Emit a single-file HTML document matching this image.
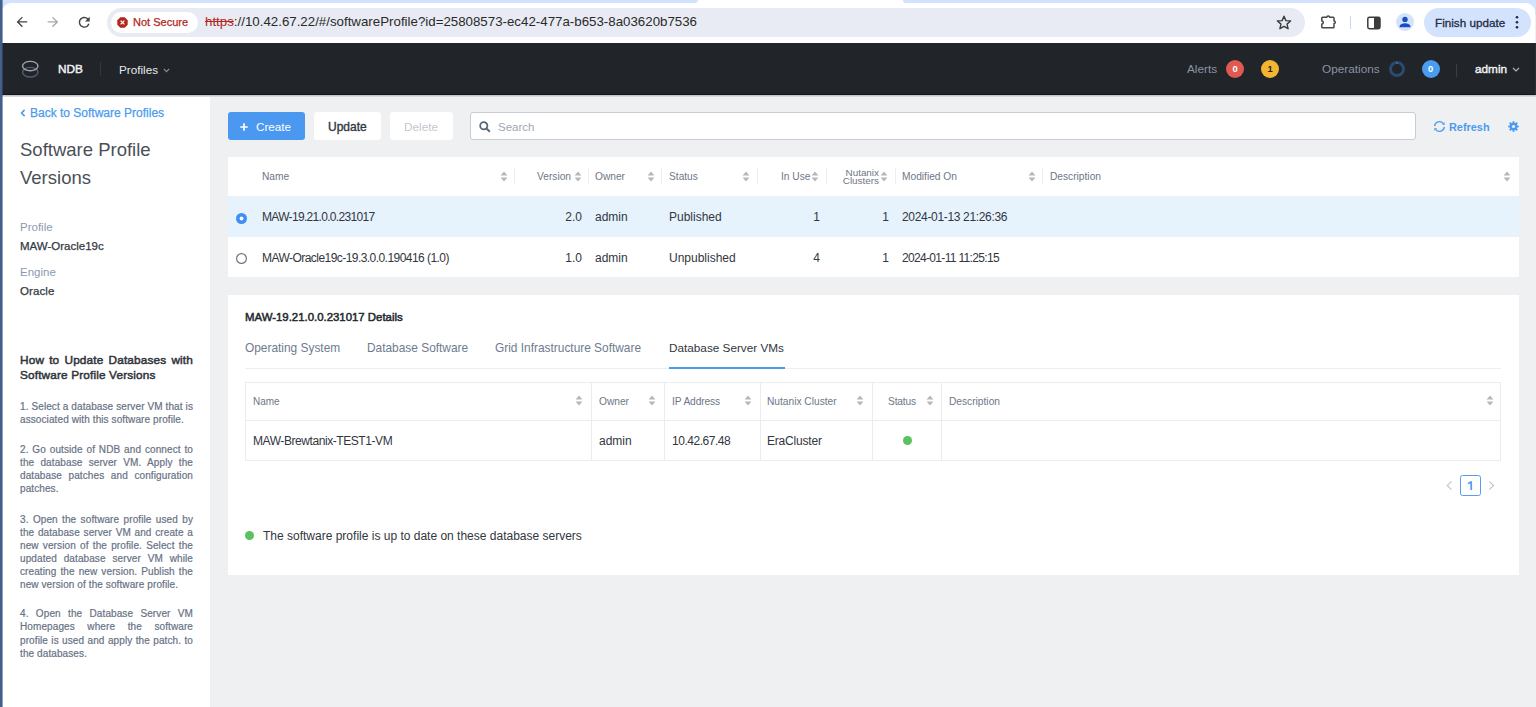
<!DOCTYPE html>
<html><head><meta charset="utf-8">
<style>
*{margin:0;padding:0;box-sizing:border-box}
html,body{width:1536px;height:707px;overflow:hidden;background:#eff0f2;font-family:"Liberation Sans",sans-serif;position:relative}
.a{position:absolute;white-space:nowrap}
#tabs{position:absolute;left:0;top:0;width:1536px;height:8px;background:#d3e3fd}
#tabgap{position:absolute;left:696px;top:0;width:209px;height:8px;background:#fff}
#toolbar{position:absolute;left:2px;top:3px;width:1533px;height:40px;background:#fff;border-radius:9px 9px 0 0}
#lborder{position:absolute;left:0;top:0;width:3px;height:707px;background:linear-gradient(90deg,#46638f 0,#3e5a88 2px,rgba(62,90,136,0.55) 2px,rgba(62,90,136,0.55) 3px)}
#omni{position:absolute;left:107px;top:8px;width:1198px;height:29px;background:#e8ebf3;border-radius:15px}
#chip{position:absolute;left:111px;top:12px;width:87px;height:21px;background:#fff;border-radius:11px}
#nav{position:absolute;left:2px;top:43px;width:1534px;height:52px;background:#212429;border-right:1px solid #2b2e34}
#navshadow{position:absolute;left:2px;top:94px;width:1533px;height:1px;background:#16181c}
#side{position:absolute;left:2px;top:95px;width:208px;height:612px;background:#fff}
#shadow{position:absolute;left:2px;top:95px;width:1534px;height:2px;background:linear-gradient(#bcbdc1,#e3e4e7)}
.btn{position:absolute;top:112px;height:28px;border-radius:3px;background:#fff}
.tbl{position:absolute;background:#fff}
.hd{position:absolute;font-size:10.2px;color:#6e7787}
.cell{position:absolute;font-size:12px;color:#32363e}
.sep{position:absolute;width:1px;background:#eceef0}
.sort{position:absolute;width:7px;height:11px}
.sort:before{content:"";position:absolute;left:0;top:0;border-left:3.5px solid transparent;border-right:3.5px solid transparent;border-bottom:4px solid #b9bdc4}
.sort:after{content:"";position:absolute;left:0;top:6px;border-left:3.5px solid transparent;border-right:3.5px solid transparent;border-top:4px solid #b9bdc4}
.pl{position:absolute;left:20px;width:173px;height:13px;font-size:10px;letter-spacing:0.1px;line-height:13px;color:#687285;-webkit-text-stroke:0.2px #687285;text-align:justify;text-align-last:justify;white-space:nowrap}
.pl.last{text-align-last:left}
</style></head><body>
<div class="a" style="left:0;top:0;width:1536px;height:3px;background:#fff"></div>
<div class="a" style="left:0;top:0;width:698px;height:3px;background:#d3e3fd;border-radius:0 0 4px 0"></div>
<div class="a" style="left:903px;top:0;width:633px;height:3px;background:#d3e3fd;border-radius:0 0 0 4px"></div>
<div class="a" style="left:0;top:3px;width:20px;height:12px;background:#d3e3fd"></div>
<div class="a" style="left:1516px;top:3px;width:20px;height:12px;background:#d3e3fd"></div>
<div id="toolbar"></div>

<!-- browser icons -->
<svg class="a" style="left:13.5px;top:14.4px" width="15.9" height="15.9" viewBox="0 0 24 24"><path d="M20 11H7.83l5.59-5.59L12 4l-8 8 8 8 1.41-1.41L7.83 13H20v-2z" fill="#474747"/></svg>
<svg class="a" style="left:44.5px;top:14.4px" width="15.9" height="15.9" viewBox="0 0 24 24"><path d="M12 4l-1.41 1.41L16.17 11H4v2h12.17l-5.58 5.59L12 20l8-8z" fill="#a8a8a8"/></svg>
<svg class="a" style="left:75.5px;top:13.6px" width="16.5" height="16.5" viewBox="0 0 24 24"><path d="M17.65 6.35A7.958 7.958 0 0 0 12 4c-4.42 0-7.99 3.58-7.99 8s3.57 8 7.99 8c3.73 0 6.84-2.55 7.73-6h-2.08A5.99 5.99 0 0 1 12 18c-3.310 0-6-2.69-6-6s2.69-6 6-6c1.66 0 3.14.69 4.22 1.78L13 11h7V4l-2.35 2.35z" fill="#474747"/></svg>

<div id="omni"></div>
<div id="chip"></div>
<svg class="a" style="left:117px;top:17px" width="11" height="11" viewBox="0 0 11 11"><path d="M3.3 0.3H7.7L10.7 3.3V7.7L7.7 10.7H3.3L0.3 7.7V3.3Z" fill="#b3261e"/><path d="M3.6 3.6L7.4 7.4M7.4 3.6L3.6 7.4" stroke="#fff" stroke-width="1.3"/></svg>
<div class="a" style="left:133px;top:14px;font-size:11px;line-height:16px;color:#b3261e;-webkit-text-stroke:0.25px #b3261e">Not Secure</div>
<div class="a" style="left:205px;top:13px;font-size:13.3px;line-height:18px;color:#2a2a2a"><span style="color:#b3261e;text-decoration:line-through">https</span>://10.42.67.22/#/softwareProfile?id=25808573-ec42-477a-b653-8a03620b7536</div>

<svg class="a" style="left:1276px;top:15px" width="16" height="15" viewBox="0 0 16 15"><path d="M8 1.2L9.9 5.6L14.6 6L11 9.1L12.1 13.7L8 11.3L3.9 13.7L5 9.1L1.4 6L6.1 5.6Z" fill="none" stroke="#3c3c3c" stroke-width="1.4" stroke-linejoin="round"/></svg>
<svg class="a" style="left:1319px;top:13px" width="18" height="18" viewBox="0 0 18 18"><path d="M3.6 4.3H7.8A1.4 1.4 0 0 1 10.6 4.3H14.2Q15 4.3 15 5.1V7.9A1.3 1.3 0 0 1 15 10.5V14Q15 14.8 14.2 14.8H3.6Q2.8 14.8 2.8 14V11A1.5 1.5 0 0 0 2.8 8V5.1Q2.8 4.3 3.6 4.3Z" fill="none" stroke="#474747" stroke-width="1.5" stroke-linejoin="round"/></svg>
<div class="a" style="left:1350px;top:16px;width:1px;height:13px;background:#c6d6f4"></div>
<svg class="a" style="left:1367px;top:15.5px" width="14" height="14" viewBox="0 0 14 14"><rect x="0.8" y="1.3" width="12.2" height="11.4" rx="1.6" fill="none" stroke="#3c3c3c" stroke-width="1.5"/><rect x="7" y="1.3" width="6" height="11.4" fill="#3c3c3c"/></svg>
<div class="a" style="left:1396px;top:13px;width:18px;height:18px;border-radius:50%;background:#d3e3fd"></div>
<svg class="a" style="left:1396px;top:13px" width="18" height="18" viewBox="0 0 18 18"><circle cx="9" cy="6.4" r="2.7" fill="#1a4fc2"/><path d="M3.6 14.2V13.4C3.6 11.2 7 10.3 9 10.3C11 10.3 14.4 11.2 14.4 13.4V14.2Z" fill="#1a4fc2"/></svg>
<div class="a" style="left:1424px;top:8px;width:107px;height:29px;border-radius:15px;background:#d3e3fd"></div>
<div class="a" style="left:1435px;top:15px;font-size:11.7px;line-height:16px;color:#1f2b47;-webkit-text-stroke:0.3px #1f2b47">Finish update</div>
<svg class="a" style="left:1514px;top:15px" width="6" height="15" viewBox="0 0 6 15"><circle cx="3" cy="2.3" r="1.3" fill="#1f2b47"/><circle cx="3" cy="7.3" r="1.3" fill="#1f2b47"/><circle cx="3" cy="12.3" r="1.3" fill="#1f2b47"/></svg>

<!-- nav -->
<div id="nav"></div>
<div id="navshadow"></div>
<svg class="a" style="left:20px;top:59px" width="21" height="20" viewBox="0 0 21 20"><ellipse cx="10.25" cy="13.2" rx="7.7" ry="4.8" fill="none" stroke="#535d70" stroke-width="1.4"/><ellipse cx="10.25" cy="7.1" rx="7.7" ry="4.7" fill="none" stroke="#9ea4af" stroke-width="1.4"/></svg>
<div class="a" style="left:58px;top:62.3px;font-size:11.8px;line-height:15px;color:#f0f1f3;-webkit-text-stroke:0.45px #f0f1f3">NDB</div>
<div class="a" style="left:100px;top:62px;width:1px;height:14px;background:#33383f"></div>
<div class="a" style="left:119px;top:62px;font-size:11.7px;line-height:15px;color:#e6e8ec">Profiles</div>
<svg class="a" style="left:163px;top:67.5px" width="7" height="5" viewBox="0 0 7 5"><path d="M0.8 0.8L3.5 3.6L6.2 0.8" fill="none" stroke="#8792a8" stroke-width="1.1"/></svg>

<div class="a" style="left:1187px;top:62px;font-size:11.8px;line-height:15px;color:#8a93a2">Alerts</div>
<div class="a" style="left:1226px;top:60.3px;width:18px;height:18px;border-radius:50%;background:#e05a52;color:#fff;font-size:9.3px;line-height:18px;text-align:center;font-weight:700">0</div>
<div class="a" style="left:1261px;top:60.3px;width:18px;height:18px;border-radius:50%;background:#f2b632;color:#222;font-size:9.3px;line-height:18px;text-align:center;font-weight:700">1</div>
<div class="a" style="left:1322px;top:62px;font-size:11.8px;line-height:15px;color:#8a93a2">Operations</div>
<div class="a" style="left:1389px;top:61.3px;width:16px;height:16px;border-radius:50%;border:3px solid #2a4a6f"></div><div class="a" style="left:1395.6px;top:61.6px;width:2.6px;height:2.6px;border-radius:50%;background:#3f6fa3"></div>
<div class="a" style="left:1421.5px;top:60.3px;width:18px;height:18px;border-radius:50%;background:#4a9cf0;color:#fff;font-size:9.3px;line-height:18px;text-align:center;font-weight:700">0</div>
<div class="a" style="left:1456px;top:64px;width:1px;height:13px;background:#3a3f47"></div>
<div class="a" style="left:1475px;top:62px;font-size:11.8px;line-height:15px;color:#f2f3f5;-webkit-text-stroke:0.4px #f2f3f5">admin</div>
<svg class="a" style="left:1512px;top:67px" width="8" height="5" viewBox="0 0 8 5"><path d="M1 1L4 4L7 1" fill="none" stroke="#a9b1bf" stroke-width="1.2"/></svg>

<!-- sidebar -->
<div id="side"></div>
<div id="shadow"></div>
<svg class="a" style="left:20px;top:109px" width="6" height="8" viewBox="0 0 6 8"><path d="M4.6 0.9L1.6 4L4.6 7.1" fill="none" stroke="#4a9bf0" stroke-width="1.6"/></svg>
<div class="a" style="left:30px;top:106px;font-size:12px;line-height:15px;color:#4a9bf0;-webkit-text-stroke:0.25px #4a9bf0">Back to Software Profiles</div>
<div class="a" style="left:20px;top:136px;font-size:18.5px;line-height:28.3px;color:#4a4f57;white-space:normal;width:180px">Software Profile<br>Versions</div>
<div class="a" style="left:20px;top:220px;font-size:11.5px;line-height:15px;color:#8b9ab2">Profile</div>
<div class="a" style="left:20px;top:238.5px;font-size:11.5px;line-height:15px;color:#34383f;-webkit-text-stroke:0.25px #34383f">MAW-Oracle19c</div>
<div class="a" style="left:20px;top:265px;font-size:11.5px;line-height:15px;color:#8b9ab2">Engine</div>
<div class="a" style="left:20px;top:284px;font-size:11.5px;line-height:15px;color:#34383f;-webkit-text-stroke:0.25px #34383f;letter-spacing:0.1px">Oracle</div>
<div class="a" style="left:20px;top:353.3px;width:173px;font-size:11.8px;line-height:14.6px;letter-spacing:0.15px;color:#30343b;-webkit-text-stroke:0.5px #30343b;text-align:justify;text-align-last:justify">How to Update Databases with</div>
<div class="a" style="left:20px;top:368.4px;font-size:11.8px;line-height:14.6px;letter-spacing:0.15px;color:#30343b;-webkit-text-stroke:0.5px #30343b">Software Profile Versions</div>
<div class="pl" style="top:399.9px">1. Select a database server VM that is</div>
<div class="pl last" style="top:413.0px">associated with this software profile.</div>

<div class="pl" style="top:442.8px">2. Go outside of NDB and connect to</div>
<div class="pl" style="top:455.9px">the database server VM. Apply the</div>
<div class="pl" style="top:469.1px">database patches and configuration</div>
<div class="pl last" style="top:482.2px">patches.</div>

<div class="pl" style="top:512.6px">3. Open the software profile used by</div>
<div class="pl" style="top:525.8px">the database server VM and create a</div>
<div class="pl" style="top:538.9px">new version of the profile. Select the</div>
<div class="pl" style="top:552.1px">updated database server VM while</div>
<div class="pl" style="top:565.2px">creating the new version. Publish the</div>
<div class="pl last" style="top:578.4px">new version of the software profile.</div>

<div class="pl" style="top:607.2px">4. Open the Database Server VM</div>
<div class="pl" style="top:620.4px">Homepages where the software</div>
<div class="pl" style="top:633.5px">profile is used and apply the patch. to</div>
<div class="pl last" style="top:646.7px">the databases.</div>

<!-- toolbar -->
<div class="btn" style="left:228px;width:77px;background:#4a98f0"></div>
<svg class="a" style="left:240px;top:122.5px" width="8" height="8" viewBox="0 0 8 8"><path d="M4 0.3V7.7M0.3 4H7.7" stroke="#fff" stroke-width="1.7"/></svg>
<div class="a" style="left:256px;top:119px;font-size:11.7px;line-height:16px;color:#fff">Create</div>
<div class="btn" style="left:314px;width:67px"></div>
<div class="a" style="left:328px;top:119px;font-size:12px;line-height:16px;color:#32363d;-webkit-text-stroke:0.35px #32363d">Update</div>
<div class="btn" style="left:390px;width:63px"></div>
<div class="a" style="left:404px;top:119px;font-size:11.75px;line-height:16px;color:#c3c7cf">Delete</div>
<div class="a" style="left:470px;top:112px;width:946px;height:28px;border:1px solid #c9ccd3;border-radius:3px;background:#fff"></div>
<svg class="a" style="left:479px;top:121px" width="12" height="12" viewBox="0 0 12 12"><circle cx="4.8" cy="4.8" r="3.6" fill="none" stroke="#5d6878" stroke-width="1.8"/><path d="M7.5 7.5L10.8 10.8" stroke="#5d6878" stroke-width="2"/></svg>
<div class="a" style="left:498px;top:119px;font-size:11.5px;line-height:16px;color:#a0a8b5">Search</div>
<svg class="a" style="left:1432.5px;top:120px" width="13" height="13" viewBox="0 0 13 13"><path d="M1.62 6.07A4.9 4.9 0 0 1 10.25 3.35M11.38 6.93A4.9 4.9 0 0 1 2.75 9.65" fill="none" stroke="#4a9bf0" stroke-width="1.3"/><path d="M11.54 4.88L11.71 2.13L8.80 4.57ZM1.46 8.12L1.29 10.87L4.20 8.43Z" fill="#4a9bf0"/></svg>
<div class="a" style="left:1449px;top:119px;font-size:10.9px;line-height:16px;font-weight:700;color:#4a9bf0">Refresh</div>
<svg class="a" style="left:1508px;top:121px" width="11" height="11" viewBox="0 0 11 11"><g fill="#4a9bf0"><circle cx="5.5" cy="5.5" r="3.7"/><rect x="4.5" y="0.2" width="2" height="10.6" rx="0.4" transform="rotate(0 5.5 5.5)"/><rect x="4.5" y="0.2" width="2" height="10.6" rx="0.4" transform="rotate(45 5.5 5.5)"/><rect x="4.5" y="0.2" width="2" height="10.6" rx="0.4" transform="rotate(90 5.5 5.5)"/><rect x="4.5" y="0.2" width="2" height="10.6" rx="0.4" transform="rotate(135 5.5 5.5)"/></g><circle cx="5.5" cy="5.5" r="1.6" fill="#eff0f2"/></svg>

<!-- table 1 -->
<div class="tbl" style="left:228px;top:157px;width:1291px;height:120px"></div>
<div class="a" style="left:228px;top:196px;width:1291px;height:41px;background:#e6f3fd"></div>
<div class="hd" style="left:262px;top:170px;line-height:13px">Name</div>
<svg class="a" style="left:500.0px;top:171.0px" width="8" height="11" viewBox="0 0 8 11"><path d="M0.6 4.6L4 0.4L7.4 4.6ZM0.6 6.4H7.4L4 10.6Z" fill="#b5b7bb"/></svg>
<div class="sep" style="left:514px;top:168px;height:16px"></div>
<div class="hd" style="left:537px;top:170px;line-height:13px">Version</div>
<svg class="a" style="left:574.0px;top:171.0px" width="8" height="11" viewBox="0 0 8 11"><path d="M0.6 4.6L4 0.4L7.4 4.6ZM0.6 6.4H7.4L4 10.6Z" fill="#b5b7bb"/></svg>
<div class="sep" style="left:588px;top:168px;height:16px"></div>
<div class="hd" style="left:595px;top:170px;line-height:13px">Owner</div>
<svg class="a" style="left:647.0px;top:171.0px" width="8" height="11" viewBox="0 0 8 11"><path d="M0.6 4.6L4 0.4L7.4 4.6ZM0.6 6.4H7.4L4 10.6Z" fill="#b5b7bb"/></svg>
<div class="sep" style="left:661px;top:168px;height:16px"></div>
<div class="hd" style="left:669px;top:170px;line-height:13px">Status</div>
<svg class="a" style="left:742.0px;top:171.0px" width="8" height="11" viewBox="0 0 8 11"><path d="M0.6 4.6L4 0.4L7.4 4.6ZM0.6 6.4H7.4L4 10.6Z" fill="#b5b7bb"/></svg>
<div class="sep" style="left:757px;top:168px;height:16px"></div>
<div class="hd" style="left:781px;top:170px;line-height:13px">In Use</div>
<svg class="a" style="left:811.0px;top:171.0px" width="8" height="11" viewBox="0 0 8 11"><path d="M0.6 4.6L4 0.4L7.4 4.6ZM0.6 6.4H7.4L4 10.6Z" fill="#b5b7bb"/></svg>
<div class="sep" style="left:826px;top:168px;height:16px"></div>
<div class="hd" style="left:839px;top:168.5px;line-height:8px;font-size:9.9px;text-align:right;width:40px">Nutanix<br>Clusters</div>
<svg class="a" style="left:880.0px;top:171.0px" width="8" height="11" viewBox="0 0 8 11"><path d="M0.6 4.6L4 0.4L7.4 4.6ZM0.6 6.4H7.4L4 10.6Z" fill="#b5b7bb"/></svg>
<div class="sep" style="left:895px;top:168px;height:16px"></div>
<div class="hd" style="left:902px;top:170px;line-height:13px">Modified On</div>
<svg class="a" style="left:1028.0px;top:171.0px" width="8" height="11" viewBox="0 0 8 11"><path d="M0.6 4.6L4 0.4L7.4 4.6ZM0.6 6.4H7.4L4 10.6Z" fill="#b5b7bb"/></svg>
<div class="sep" style="left:1042px;top:168px;height:16px"></div>
<div class="hd" style="left:1050px;top:170px;line-height:13px">Description</div>
<svg class="a" style="left:1503.0px;top:171.0px" width="8" height="11" viewBox="0 0 8 11"><path d="M0.6 4.6L4 0.4L7.4 4.6ZM0.6 6.4H7.4L4 10.6Z" fill="#b5b7bb"/></svg>

<svg class="a" style="left:236px;top:213px" width="11" height="11" viewBox="0 0 11 11"><circle cx="5.5" cy="5.5" r="5.5" fill="#3f8ef5"/><circle cx="5.5" cy="5.5" r="1.9" fill="#fff"/></svg>
<div class="cell" style="left:262px;top:209px;line-height:16px;letter-spacing:-0.68px">MAW-19.21.0.0.231017</div>
<div class="cell" style="left:561px;top:209px;line-height:16px;width:21px;text-align:right">2.0</div>
<div class="cell" style="left:595px;top:209px;line-height:16px">admin</div>
<div class="cell" style="left:669px;top:209px;line-height:16px">Published</div>
<div class="cell" style="left:800px;top:209px;line-height:16px;width:20px;text-align:right">1</div>
<div class="cell" style="left:869px;top:209px;line-height:16px;width:20px;text-align:right">1</div>
<div class="cell" style="left:902px;top:209px;line-height:16px;letter-spacing:-0.33px">2024-01-13 21:26:36</div>

<svg class="a" style="left:236px;top:253px" width="11" height="11" viewBox="0 0 11 11"><circle cx="5.5" cy="5.5" r="4.9" fill="#fff" stroke="#6e7587" stroke-width="1.2"/></svg>
<div class="cell" style="left:262px;top:249.5px;line-height:16px;letter-spacing:-0.55px">MAW-Oracle19c-19.3.0.0.190416 (1.0)</div>
<div class="cell" style="left:561px;top:249.5px;line-height:16px;width:21px;text-align:right">1.0</div>
<div class="cell" style="left:595px;top:249.5px;line-height:16px">admin</div>
<div class="cell" style="left:669px;top:249.5px;line-height:16px">Unpublished</div>
<div class="cell" style="left:800px;top:249.5px;line-height:16px;width:20px;text-align:right">4</div>
<div class="cell" style="left:869px;top:249.5px;line-height:16px;width:20px;text-align:right">1</div>
<div class="cell" style="left:902px;top:249.5px;line-height:16px;letter-spacing:-0.67px">2024-01-11 11:25:15</div>

<!-- details -->
<div class="tbl" style="left:228px;top:295px;width:1291px;height:279.5px"></div>
<div class="a" style="left:245px;top:310px;font-size:11.4px;line-height:15px;color:#24282e;-webkit-text-stroke:0.5px #24282e">MAW-19.21.0.0.231017 Details</div>
<div class="a" style="left:245px;top:340px;font-size:11.9px;line-height:16px;color:#6e7b90">Operating System</div>
<div class="a" style="left:367px;top:340px;font-size:11.9px;line-height:16px;color:#6e7b90">Database Software</div>
<div class="a" style="left:495px;top:340px;font-size:11.9px;line-height:16px;color:#6e7b90">Grid Infrastructure Software</div>
<div class="a" style="left:669px;top:340px;font-size:11.75px;line-height:16px;color:#32363d">Database Server VMs</div>
<div class="a" style="left:245px;top:368px;width:1256px;height:1px;background:#eceef1"></div>
<div class="a" style="left:669px;top:367px;width:116px;height:2px;background:#4a9bf0"></div>

<div class="a" style="left:245px;top:382px;width:1256px;height:79px;border:1px solid #ececec"></div>
<div class="a" style="left:245px;top:420px;width:1256px;height:1px;background:#ececec"></div>
<div class="sep" style="left:591px;top:382px;height:79px;background:#ececec"></div>
<div class="sep" style="left:664px;top:382px;height:79px;background:#ececec"></div>
<div class="sep" style="left:760px;top:382px;height:79px;background:#ececec"></div>
<div class="sep" style="left:872px;top:382px;height:79px;background:#ececec"></div>
<div class="sep" style="left:941px;top:382px;height:79px;background:#ececec"></div>
<div class="hd" style="left:253px;top:394.5px;line-height:13px;font-size:10px">Name</div>
<svg class="a" style="left:575.0px;top:395.0px" width="8" height="11" viewBox="0 0 8 11"><path d="M0.6 4.6L4 0.4L7.4 4.6ZM0.6 6.4H7.4L4 10.6Z" fill="#b5b7bb"/></svg>
<div class="hd" style="left:599px;top:394.5px;line-height:13px">Owner</div>
<svg class="a" style="left:648.0px;top:395.0px" width="8" height="11" viewBox="0 0 8 11"><path d="M0.6 4.6L4 0.4L7.4 4.6ZM0.6 6.4H7.4L4 10.6Z" fill="#b5b7bb"/></svg>
<div class="hd" style="left:672px;top:394.5px;line-height:13px;letter-spacing:-0.1px">IP Address</div>
<svg class="a" style="left:744.0px;top:395.0px" width="8" height="11" viewBox="0 0 8 11"><path d="M0.6 4.6L4 0.4L7.4 4.6ZM0.6 6.4H7.4L4 10.6Z" fill="#b5b7bb"/></svg>
<div class="hd" style="left:767px;top:394.5px;line-height:13px">Nutanix Cluster</div>
<svg class="a" style="left:856.0px;top:395.0px" width="8" height="11" viewBox="0 0 8 11"><path d="M0.6 4.6L4 0.4L7.4 4.6ZM0.6 6.4H7.4L4 10.6Z" fill="#b5b7bb"/></svg>
<div class="hd" style="left:888px;top:394.5px;line-height:13px;letter-spacing:-0.15px">Status</div>
<svg class="a" style="left:926.0px;top:395.0px" width="8" height="11" viewBox="0 0 8 11"><path d="M0.6 4.6L4 0.4L7.4 4.6ZM0.6 6.4H7.4L4 10.6Z" fill="#b5b7bb"/></svg>
<div class="hd" style="left:949px;top:394.5px;line-height:13px">Description</div>
<svg class="a" style="left:1486.0px;top:395.0px" width="8" height="11" viewBox="0 0 8 11"><path d="M0.6 4.6L4 0.4L7.4 4.6ZM0.6 6.4H7.4L4 10.6Z" fill="#b5b7bb"/></svg>
<div class="cell" style="left:253px;top:433px;line-height:16px;letter-spacing:-0.43px">MAW-Brewtanix-TEST1-VM</div>
<div class="cell" style="left:599px;top:433px;line-height:16px">admin</div>
<div class="cell" style="left:672px;top:433px;line-height:16px;letter-spacing:-0.47px">10.42.67.48</div>
<div class="cell" style="left:767px;top:433px;line-height:16px;letter-spacing:-0.2px">EraCluster</div>
<div class="a" style="left:903px;top:436px;width:9px;height:9px;border-radius:50%;background:#5cc162"></div>

<svg class="a" style="left:1446px;top:481px" width="7" height="9" viewBox="0 0 7 9"><path d="M5.6 0.4L1.2 4.5L5.6 8.6" fill="none" stroke="#c2c4c8" stroke-width="1.1"/></svg>
<div class="a" style="left:1460px;top:475px;width:21px;height:21px;border:1px solid #5b9cf2;border-radius:2.5px"></div>
<svg class="a" style="left:1466px;top:480px" width="8" height="11" viewBox="0 0 8 11"><path d="M4.3 1.2H6.1V10H4.3V3.4L2.3 4.3L1.6 3Z" fill="#5b9cf2"/></svg>
<svg class="a" style="left:1488px;top:481px" width="7" height="9" viewBox="0 0 7 9"><path d="M1.2 0.4L5.6 4.5L1.2 8.6" fill="none" stroke="#c2c4c8" stroke-width="1.1"/></svg>

<div class="a" style="left:245px;top:531px;width:9px;height:9px;border-radius:50%;background:#5cc162"></div>
<div class="a" style="left:263px;top:529px;font-size:12px;line-height:15px;color:#32363d">The software profile is up to date on these database servers</div>
<div id="lborder"></div>
</body></html>
